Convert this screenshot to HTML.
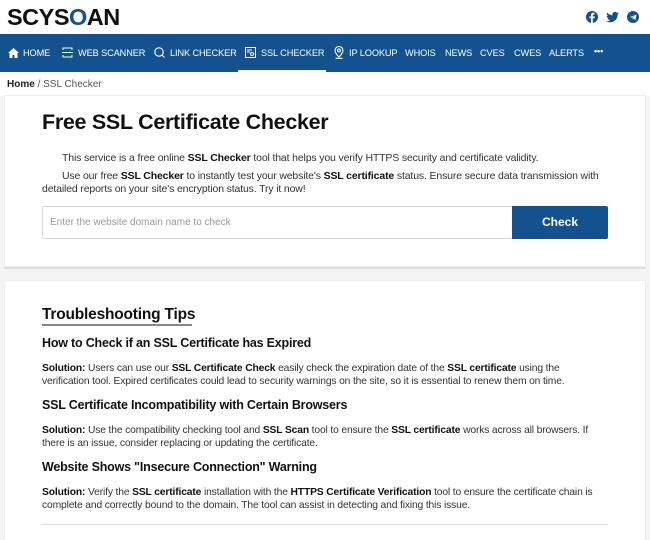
<!DOCTYPE html>
<html><head><style>
*{margin:0;padding:0;box-sizing:border-box}
body{width:650px;height:535px;overflow:hidden;background:#f4f4f4;font-family:"Liberation Sans",Arial,sans-serif;color:#222;position:relative}
.abs{position:absolute}
.top{position:absolute;left:0;top:0;width:650px;height:34px;background:#fff}
.logo{left:7px;top:4px;font-size:23.5px;font-weight:bold;letter-spacing:-0.5px;color:#111;font-family:"Liberation Sans",sans-serif}
.nav{left:0;top:34px;width:650px;height:38px;background:#13528f}
.nav span{position:absolute;top:14px;color:#fff;font-size:9.2px;letter-spacing:-0.1px;white-space:nowrap}
.bc{left:0;top:72px;width:650px;height:24px;background:#fff}
.card{position:absolute;left:4px;width:642px;background:#fff;border:1px solid #eee}
p.t{font-size:10.5px;line-height:13px;color:#333;letter-spacing:-0.15px}
b{color:#111}
h3{position:absolute;left:42px;font-size:12.5px;color:#111;letter-spacing:-0.2px}
.sol{position:absolute;left:42px;width:566px;font-size:10.3px;line-height:12.5px;color:#333;letter-spacing:-0.15px}
</style></head><body>
<div class="top"></div>
<div class="abs logo">SCYS<span style="color:#13528f">O</span>AN</div>
<svg class="abs" style="left:585px;top:10px" width="56" height="14" viewBox="0 0 56 14">
<circle cx="7" cy="7" r="6" fill="#13528f"/><path d="M7.8 13V8.2h1.6l.3-1.8H7.8V5.3c0-.5.2-.8.8-.8h1V2.9c-.2 0-.8-.1-1.4-.1-1.4 0-2.2.8-2.2 2.3v1.3H4.5v1.8H6V13z" fill="#fff"/>
<path d="M34 3.2c-.5.2-1 .4-1.5.4.5-.3 1-.8 1.2-1.4-.5.3-1.1.5-1.700.6a2.6 2.6 0 0 0-4.5 2.4c-2.2-.1-4.1-1.1-5.4-2.7-.7 1.2-.3 2.7.8 3.5-.4 0-.8-.1-1.2-.3 0 1.3.9 2.4 2.1 2.6-.4.1-.8.1-1.2 0 .3 1.1 1.3 1.8 2.5 1.8-1.1.9-2.5 1.3-3.9 1.1 1.2.7 2.6 1.1 4 1.1 4.9 0 7.6-4.1 7.4-7.8.5-.4 1-.9 1.4-1.3z" fill="#13528f"/>
<circle cx="48" cy="7" r="6" fill="#13528f"/><path d="M45 7l6.5-2.5-1 5.5-2-1.5-1 1v-1.5l2.5-2.3-3.2 1.9z" fill="#fff"/>
</svg>
<div class="abs nav">
<svg class="abs" style="left:8px;top:14px" width="11" height="10" viewBox="0 0 11 10"><path d="M5.5 0L0 5h1.5v5h3V7h2v3h3V5H11z" fill="#fff"/></svg>
<span style="left:23px">HOME</span>
<svg class="abs" style="left:62px;top:13px" width="11" height="11" viewBox="0 0 11 11" fill="none" stroke="#fff" stroke-width="1"><path d="M1 3V1h9v2M1 8v2h9V8M0 5.5h11"/></svg>
<span style="left:78px">WEB SCANNER</span>
<svg class="abs" style="left:154px;top:13px" width="11" height="11" viewBox="0 0 11 11" fill="none" stroke="#fff" stroke-width="1.1"><circle cx="5" cy="5" r="4.2"/><path d="M8 8l2.5 2.5"/></svg>
<span style="left:170px">LINK CHECKER</span>
<svg class="abs" style="left:245px;top:13px" width="11" height="11" viewBox="0 0 11 11" fill="none" stroke="#fff" stroke-width="1"><rect x="0.5" y="0.5" width="10" height="10"/><path d="M2 3h5M2 5h3"/><circle cx="7" cy="7" r="1.5"/></svg>
<span style="left:261px">SSL CHECKER</span>
<div class="abs" style="left:238px;top:36px;width:88px;height:2px;background:#fff"></div>
<svg class="abs" style="left:334px;top:12px" width="10" height="13" viewBox="0 0 10 13" fill="none" stroke="#fff" stroke-width="1.1"><path d="M5 11S1 7 1 4.5a4 4 0 0 1 8 0C9 7 5 11 5 11z"/><circle cx="5" cy="4.5" r="1.4"/><path d="M1.5 12.3h7"/></svg>
<span style="left:349px">IP LOOKUP</span>
<span style="left:405px">WHOIS</span>
<span style="left:445px">NEWS</span>
<span style="left:480px">CVES</span>
<span style="left:514px">CWES</span>
<span style="left:549px">ALERTS</span>
<span style="left:594px;top:12px;font-weight:bold;font-size:9px">•••</span>
</div>
<div class="abs bc"><div class="abs" style="left:7px;top:7px;font-size:10px;color:#555"><b style="color:#222">Home</b> / SSL Checker</div></div>
<div class="card" style="top:95px;height:172px;box-shadow:0 2px 0 #ddd">
<div class="abs" style="left:37px;top:14px;font-size:21.5px;font-weight:bold;color:#111;letter-spacing:-0.3px">Free SSL Certificate Checker</div>
<div class="abs" style="left:37px;top:56px;width:570px">
<p class="t" style="text-indent:20px">This service is a free online <b>SSL Checker</b> tool that helps you verify HTTPS security and certificate validity.</p>
<p class="t" style="text-indent:20px;margin-top:5px">Use our free <b>SSL Checker</b> to instantly test your website's <b>SSL certificate</b> status. Ensure secure data transmission with detailed reports on your site's encryption status. Try it now!</p>
</div>
<div class="abs" style="left:37px;top:110px;width:471px;height:33px;border:1px solid #d5d8de;border-radius:2px 0 0 2px"><span class="abs" style="left:7px;top:10px;font-size:10px;color:#999">Enter the website domain name to check</span></div>
<div class="abs" style="left:507px;top:110px;width:96px;height:33px;background:#13528f;border-radius:0 2px 2px 0;color:#fff;font-weight:bold;font-size:12px;text-align:center;line-height:33px">Check</div>
</div>
<div class="card" style="top:280px;height:260px;border-bottom:none"></div>
<div class="abs" style="left:42px;top:306px;font-size:15.5px;font-weight:bold;color:#111;letter-spacing:-0.2px">Troubleshooting Tips</div>
<div class="abs" style="left:42px;top:324px;width:150px;height:2px;background:#888"></div>
<h3 style="top:336px">How to Check if an SSL Certificate has Expired</h3>
<div class="sol" style="top:363px"><b>Solution:</b> Users can use our <b>SSL Certificate Check</b> easily check the expiration date of the <b>SSL certificate</b> using the verification tool. Expired certificates could lead to security warnings on the site, so it is essential to renew them on time.</div>
<h3 style="top:398px">SSL Certificate Incompatibility with Certain Browsers</h3>
<div class="sol" style="top:425px"><b>Solution:</b> Use the compatibility checking tool and <b>SSL Scan</b> tool to ensure the <b>SSL certificate</b> works across all browsers. If there is an issue, consider replacing or updating the certificate.</div>
<h3 style="top:460px">Website Shows "Insecure Connection" Warning</h3>
<div class="sol" style="top:487px"><b>Solution:</b> Verify the <b>SSL certificate</b> installation with the <b>HTTPS Certificate Verification</b> tool to ensure the certificate chain is complete and correctly bound to the domain. The tool can assist in detecting and fixing this issue.</div>
<div class="abs" style="left:42px;top:524px;width:566px;height:1px;background:#ddd"></div>
</body></html>
